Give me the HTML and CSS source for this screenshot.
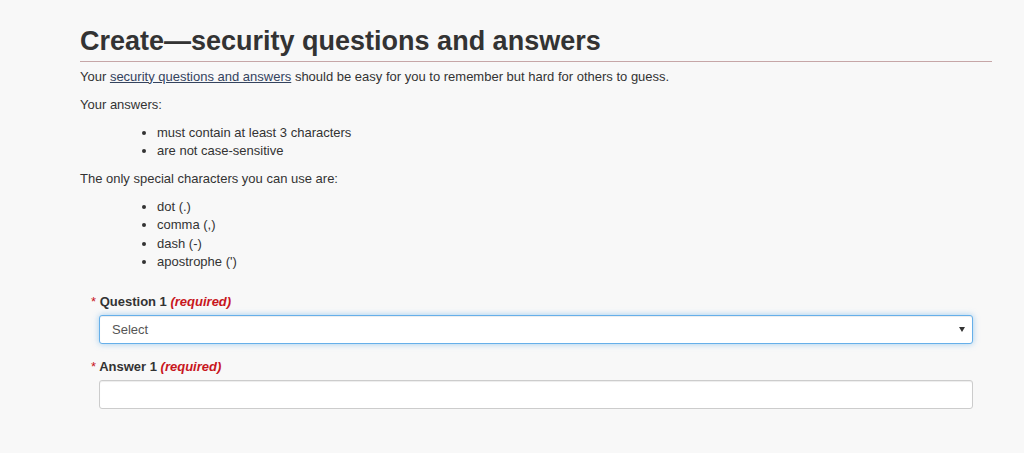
FILE: index.html
```html
<!DOCTYPE html>
<html lang="en">
<head>
<meta charset="utf-8">
<title>Create—security questions and answers</title>
<link rel="stylesheet" href="styles.css">
</head>
<body>
<main class="page">
  <h1 class="title">Create—security questions and answers</h1>
  <p class="text">Your <a class="link" href="#">security questions and answers</a> should be easy for you to remember but hard for others to guess.</p>
  <p class="text">Your answers:</p>
  <ul class="list">
    <li>must contain at least 3 characters</li>
    <li>are not case-sensitive</li>
  </ul>
  <p class="text">The only special characters you can use are:</p>
  <ul class="list">
    <li>dot (.)</li>
    <li>comma (,)</li>
    <li>dash (-)</li>
    <li>apostrophe (')</li>
  </ul>
  <form class="form">
    <div class="group">
      <label class="label" for="q1"><span class="star">*</span> Question 1 <em class="req">(required)</em></label>
      <div class="select-wrap">
        <select class="control select focused" id="q1">
          <option>Select</option>
        </select>
      </div>
    </div>
    <div class="group">
      <label class="label" for="a1"><span class="star">*</span> Answer 1 <em class="req">(required)</em></label>
      <input class="control" id="a1" type="text">
    </div>
  </form>
</main>
</body>
</html>
```
FILE: styles.css
```css
html, body {
  margin: 0;
  padding: 0;
  background: #f8f8f8;
}
body {
  font-family: "Liberation Sans", Arial, Helvetica, sans-serif;
  font-size: 13px;
  line-height: 18.5px;
  color: #333;
}
.page {
  width: 912px;
  margin-left: 80px;
  padding-top: 27px;
}
.title {
  margin: 0 0 6px;
  padding-bottom: 4px;
  font-size: 27px;
  line-height: 29.5px;
  font-weight: bold;
  color: #333;
  border-bottom: 1px solid #c6a6a7;
}
.text {
  margin: 0 0 9.5px;
}
.link {
  color: #34435e;
  text-decoration: underline;
}
.list {
  margin: 0 0 9px;
  padding-left: 77px;
}
.form {
  padding: 12px 19px 0 11px;
}
.group {
  margin-bottom: 13.5px;
}
.label {
  display: block;
  font-weight: bold;
  margin-bottom: 4px;
}
.star {
  color: #c8161d;
  font-weight: normal;
}
.req {
  color: #c8161d;
  font-style: italic;
}
.control {
  display: block;
  box-sizing: border-box;
  width: 874px;
  height: 29px;
  margin-left: 8px;
  padding: 0 12px;
  font-family: "Liberation Sans", Arial, sans-serif;
  font-size: 13px;
  color: #555;
  background: #fff;
  border: 1px solid #ccc;
  border-radius: 3px;
  box-shadow: inset 0 1px 1px rgba(0,0,0,.075);
  outline: none;
}
.select-wrap {
  position: relative;
}
.select {
  appearance: none;
  -webkit-appearance: none;
}
.select-wrap::after {
  content: "";
  position: absolute;
  right: 8px;
  top: 12px;
  border-left: 3px solid transparent;
  border-right: 3px solid transparent;
  border-top: 5px solid #333;
}
.focused {
  border-color: #66afe9;
  box-shadow: inset 0 1px 1px rgba(0,0,0,.075), 0 0 6px rgba(102,175,233,.6);
}
```
